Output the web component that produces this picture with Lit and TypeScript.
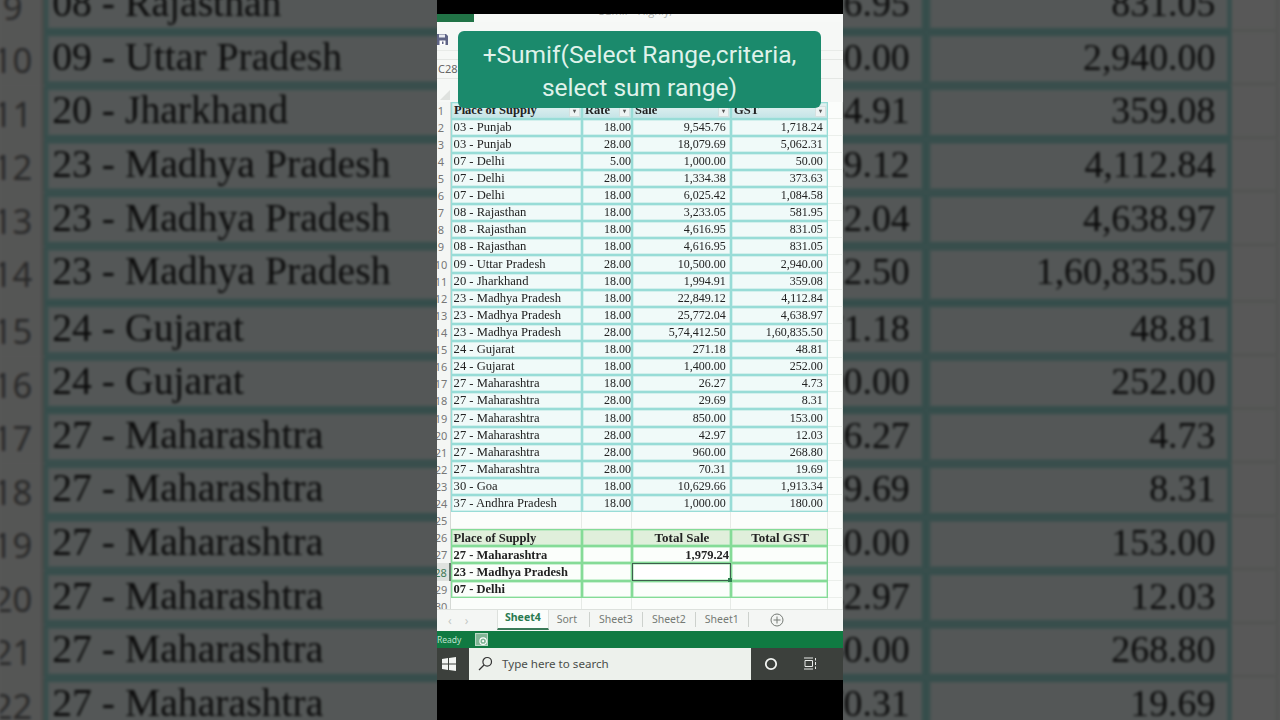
import { LitElement, html, css } from "lit";
import { customElement } from "lit/decorators.js";

const DATA: [string, string, string, string][] = [
  ["03 - Punjab", "18.00", "9,545.76", "1,718.24"],
  ["03 - Punjab", "28.00", "18,079.69", "5,062.31"],
  ["07 - Delhi", "5.00", "1,000.00", "50.00"],
  ["07 - Delhi", "28.00", "1,334.38", "373.63"],
  ["07 - Delhi", "18.00", "6,025.42", "1,084.58"],
  ["08 - Rajasthan", "18.00", "3,233.05", "581.95"],
  ["08 - Rajasthan", "18.00", "4,616.95", "831.05"],
  ["08 - Rajasthan", "18.00", "4,616.95", "831.05"],
  ["09 - Uttar Pradesh", "28.00", "10,500.00", "2,940.00"],
  ["20 - Jharkhand", "18.00", "1,994.91", "359.08"],
  ["23 - Madhya Pradesh", "18.00", "22,849.12", "4,112.84"],
  ["23 - Madhya Pradesh", "18.00", "25,772.04", "4,638.97"],
  ["23 - Madhya Pradesh", "28.00", "5,74,412.50", "1,60,835.50"],
  ["24 - Gujarat", "18.00", "271.18", "48.81"],
  ["24 - Gujarat", "18.00", "1,400.00", "252.00"],
  ["27 - Maharashtra", "18.00", "26.27", "4.73"],
  ["27 - Maharashtra", "28.00", "29.69", "8.31"],
  ["27 - Maharashtra", "18.00", "850.00", "153.00"],
  ["27 - Maharashtra", "28.00", "42.97", "12.03"],
  ["27 - Maharashtra", "28.00", "960.00", "268.80"],
  ["27 - Maharashtra", "28.00", "70.31", "19.69"],
  ["30 - Goa", "18.00", "10,629.66", "1,913.34"],
  ["37 - Andhra Pradesh", "18.00", "1,000.00", "180.00"],
];

@customElement("sheet-grid")
class SheetGrid extends LitElement {
  static styles = css`
    :host { display: block; width: 406px; }
    .grid {
      display: grid;
      grid-template-columns: 14px 131px 50px 99px 97px 15px;
      grid-auto-rows: 17.11px;
      font: 12px "Liberation Serif", serif;
      color: #222;
      background: #fbfdfb;
    }
    .n {
      font: 11px "Noto Sans", sans-serif;
      color: #777;
      display: flex; align-items: center; justify-content: center;
      padding-right: 5px; white-space: nowrap; overflow: hidden;
      background: #f4f6f4;
      border-right: 1px solid #d5d9d5;
      box-sizing: border-box;
    }
    .n.on { background: #dfe2df; border-right: 2px solid #6a786e; color: #3f7a58; }
    .c {
      display: flex; align-items: center; min-width: 0;
      padding: 0 2px; white-space: nowrap; box-sizing: border-box;
      border-right: 1px solid #e6eae6; border-bottom: 1px solid #ebefeb;
      position: relative;
    }
    .r { justify-content: flex-end; padding-right: 5px; }
    .t {
      background: #f0faf9;
      border: 1px solid #98dcd7;
      box-shadow: inset 0 0 0 .5px #b4e6e2;
    }
    .name { font-size: 12.6px; padding-left: 1.6px; }
    .t.r { padding-right: 4.2px; }
    .t.r.rate { padding-right: 0; }
    .h {
      background: linear-gradient(#e4f2f1, #c4e4e7);
      font-weight: bold; font-size: 12.5px; padding-left: 2px;
    }
    .f {
      position: absolute; right: 1px; top: 3px;
      width: 11px; height: 11px; background: #eef3f3; border: 1px solid #d5e0e0;
      box-sizing: border-box; font-size: 6px; line-height: 9px; text-align: center; color: #555;
    }
    .g {
      background: #fbfefb;
      border: 1px solid #85db97;
      box-shadow: inset 0 0 0 .5px #9be3ab;
      font-weight: bold; font-size: 12.5px; padding-left: 1.6px; padding-top: 1px;
    }
    .gh { background: #e0efdb; }
    .ctr { justify-content: center; font-size: 13px; padding-left: 3px; }
    .g.r { padding-right: 1px; }
    .sel { outline: 1.5px solid #3e5f4d; outline-offset: -1px; z-index: 1; background: #fff; }
    .sel::after {
      content: ""; position: absolute; right: -2px; bottom: -2px;
      width: 4px; height: 4px; background: #2f7d4f;
    }
  `;

  private num(n: number, on = false) {
    return html`<div class="n ${on ? "on" : ""}">${n}</div>`;
  }

  render() {
    const head = ["Place of Supply", "Rate", "Sale", "GST"];
    const summary = ["27 - Maharashtra", "23 - Madhya Pradesh", "07 - Delhi"];
    return html`<div class="grid">
      ${this.num(1)}
      ${head.map((t) => html`<div class="c t h">${t}<span class="f">▾</span></div>`)}
      <div class="c"></div>
      ${DATA.map(
        (r, i) => html`${this.num(i + 2)}
          <div class="c t name">${r[0]}</div>
          <div class="c t r rate">${r[1]}</div>
          <div class="c t r">${r[2]}</div>
          <div class="c t r">${r[3]}</div>
          <div class="c"></div>`
      )}
      ${this.num(25)}
      <div class="c"></div><div class="c"></div><div class="c"></div><div class="c"></div><div class="c"></div>
      ${this.num(26)}
      <div class="c g gh">Place of Supply</div>
      <div class="c g gh"></div>
      <div class="c g gh ctr">Total Sale</div>
      <div class="c g gh ctr">Total GST</div>
      <div class="c"></div>
      ${summary.map(
        (s, i) => html`${this.num(27 + i, i === 1)}
          <div class="c g">${s}</div>
          <div class="c g"></div>
          <div class="c g r ${i === 1 ? "sel" : ""}">${i === 0 ? "1,979.24" : ""}</div>
          <div class="c g"></div>
          <div class="c"></div>`
      )}
      ${this.num(30)}
      <div class="c"></div><div class="c"></div><div class="c"></div><div class="c"></div><div class="c"></div>
    </div>`;
  }
}

@customElement("app-root")
class AppRoot extends LitElement {
  static styles = css`
    :host {
      display: block; width: 1280px; height: 720px; overflow: hidden;
      position: relative; background: #000;
    }
    .bg { position: absolute; inset: 0; overflow: hidden; background: #fbfdfb; }
    .bg sheet-grid {
      transform-origin: 0 0;
      transform: translate(0, -453px) scale(3.15);
      filter: blur(.45px);
    }
    .dim { position: absolute; inset: 0; background: rgba(0, 0, 0, .65); }
    .panel {
      position: relative; width: 406px; height: 720px; margin: 0 auto;
      display: flex; flex-direction: column; background: #000;
    }
    .topbar { height: 14px; flex: none; background: #000; }
    .titlebar { height: 8px; flex: none; display: flex; background: #f7f9f7; overflow: hidden; }
    .tab { width: 37px; background: #217346; }
    .doc {
      flex: 1; font: 11px/8px "Open Sans", sans-serif; color: #b0b3b0; text-align: center;
      padding-right: 46px; margin-top: -7px;
    }
    .ribbon { height: 79.5px; flex: none; background: #f6f8f6; position: relative; box-sizing: border-box; }
    .save { position: absolute; left: 0; top: 11px; }
    .rule1 { position: absolute; left: 0; right: 0; top: 28px; border-top: 1px solid #e8ebe8; }
    .rule2 { position: absolute; left: 0; right: 0; top: 37px; border-top: 1px solid #e4e7e4; }
    .rule3 { position: absolute; left: 0; right: 0; top: 56px; border-top: 1px solid #e4e7e4; }
    .cellname { position: absolute; left: 1px; top: 39px; font: 11px "Noto Sans", sans-serif; color: #666; }
    .corner {
      position: absolute; left: 3px; bottom: 2px; width: 0; height: 0;
      border-left: 10px solid transparent; border-bottom: 10px solid #dfe2df;
    }
    .body { height: 507px; flex: none; overflow: hidden; background: #fbfdfb; }
    .body sheet-grid { filter: blur(.3px); }
    .tabs {
      height: 22.5px; flex: none; display: flex; align-items: flex-start;
      background: #f4f6f4; border-top: 1px solid #dde1dd; box-sizing: border-box;
      font: 10.5px "Noto Sans", sans-serif; color: #757a75;
    }
    .arrows {
      width: 60px; display: flex; gap: 13px; padding: 2px 0 0 11px; box-sizing: border-box;
      flex: none; color: #c4c8c4; font-size: 12px;
    }
    .st {
      height: 15px; display: flex; align-items: center; padding: 0 9px;
      border-right: 1px solid #cdd1cd; margin-top: 2px;
    }
    .st.active {
      font-weight: 700; color: #2a7a50; background: #fbfdfb;
      height: 20px; margin-top: 0; padding: 0 7px 3px; border-bottom: 2px solid #3a7a58;
      box-sizing: border-box; border-left: 1px solid #dde1dd; border-right: 1px solid #dde1dd;
    }
    .st.sort { padding: 0 12px 0 8px; }
    .plus { margin: 3px 0 0 21px; }
    .status {
      height: 16.5px; flex: none; background: #107a42; color: #bfe2cf;
      display: flex; align-items: center; gap: 14px;
      font: 8.5px "Noto Sans", sans-serif;
    }
    .taskbar { height: 32.5px; flex: none; background: #3c403c; display: flex; align-items: center; }
    .win { width: 32px; display: flex; justify-content: center; flex: none; padding-right: 8px; box-sizing: border-box; }
    .search {
      width: 282px; height: 32.5px; flex: none; background: #edf1ec;
      display: flex; align-items: center; gap: 9px; padding-left: 9px; box-sizing: border-box;
      font: 11.6px "Noto Sans", sans-serif; color: #4a4e4a;
    }
    .tico { display: flex; align-items: center; gap: 26px; padding-left: 13px; }
    .toast {
      position: absolute; left: 21px; top: 31px; width: 363px; height: 77px;
      background: #1b8a6c; border-radius: 6px; color: #dff2ea;
      font: 24.5px/33px Roboto, sans-serif; text-align: center;
      padding-top: 7px; box-sizing: border-box;
    }
  `;

  render() {
    return html`
      <div class="bg"><sheet-grid></sheet-grid><div class="dim"></div></div>
      <div class="panel">
        <div class="topbar"></div>
        <div class="titlebar"><div class="tab"></div><div class="doc">Sumif - Highly,</div></div>
        <div class="ribbon">
          <svg class="save" width="11" height="12" viewBox="0 0 11 12">
            <path d="M0 1h9l2 2v9H0z" fill="#5f6485"/>
            <path d="M2 1.5h6v3H2z" fill="#e8eaf0"/>
            <path d="M2.5 7.5h6V12h-6z" fill="#fff"/>
            <path d="M5 8.5h1.5V11H5z" fill="#5f6485"/>
          </svg>
          <div class="rule1"></div><div class="rule2"></div><div class="rule3"></div>
          <div class="cellname">C28</div>
          <div class="corner"></div>
        </div>
        <div class="body"><sheet-grid></sheet-grid></div>
        <div class="tabs">
          <div class="arrows"><span>‹</span><span>›</span></div>
          <div class="st active">Sheet4</div>
          <div class="st sort">Sort</div>
          <div class="st">Sheet3</div>
          <div class="st">Sheet2</div>
          <div class="st">Sheet1</div>
          <svg class="plus" width="14" height="14" viewBox="0 0 14 14" fill="none" stroke="#757a75">
            <circle cx="7" cy="7" r="6"/><path d="M7 3.5v7M3.5 7h7"/>
          </svg>
        </div>
        <div class="status">
          <span>Ready</span>
          <svg width="13" height="13" viewBox="0 0 12 12" fill="none">
            <rect x="0.5" y="0.5" width="11" height="11" fill="#7fb595" stroke="#b8d8c5"/>
            <circle cx="7.5" cy="7.5" r="3" stroke="#fff"/><circle cx="7.5" cy="7.5" r="1" fill="#fff"/>
          </svg>
        </div>
        <div class="taskbar">
          <div class="win">
            <svg width="14" height="14" viewBox="0 0 14 14" fill="#f2f4f2">
              <path d="M0 2l6-.9V6.5H0zM7 1l7-1v6.5H7zM0 7.5h6v5.4l-6-.9zM7 7.5h7V14l-7-1z"/>
            </svg>
          </div>
          <div class="search">
            <svg width="15" height="15" viewBox="0 0 15 15" fill="none" stroke="#333" stroke-width="1.2">
              <circle cx="9.2" cy="5.8" r="4.3"/><path d="M6 9L1 14"/>
            </svg>
            <span>Type here to search</span>
          </div>
          <div class="tico">
            <svg width="14" height="14" viewBox="0 0 14 14" fill="none" stroke="#f2f4f2" stroke-width="1.8">
              <circle cx="7" cy="7" r="5.2"/>
            </svg>
            <svg width="14" height="13" viewBox="0 0 14 13" fill="none" stroke="#e8eae8">
              <path d="M0 1h9M0 12h9M1 3.5h7.5v6H1zM11.5 1v2.5M11.5 5v3M11.5 9.5V12"/>
            </svg>
          </div>
        </div>
        <div class="toast">+Sumif(Select Range,criteria,<br />select sum range)</div>
      </div>
    `;
  }
}
